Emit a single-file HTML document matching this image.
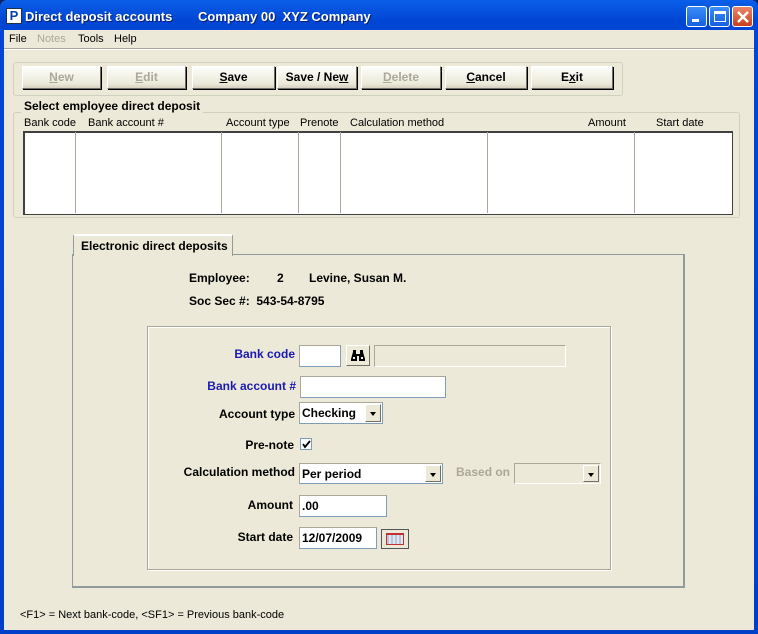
<!DOCTYPE html>
<html><head><style>
*{box-sizing:border-box;margin:0;padding:0}
body{width:758px;height:634px;overflow:hidden;font-family:"Liberation Sans",sans-serif;font-size:11px;background:#0a246a;position:relative}
.a{position:absolute}
#win{left:0;top:0;width:758px;height:634px;background:linear-gradient(#0a5fe8,#0046d5 20px,#0040c8);border-radius:7px 7px 0 0}
#client{left:4px;top:30px;width:750px;height:600px;background:#ece9d8}
.title{color:#fff;font-weight:bold;font-size:13px;top:9px;text-shadow:1px 1px #0a1e6a}
.tb{top:6px;width:21px;height:21px;border:1px solid #fff;border-radius:3px;background:linear-gradient(#3c8cf8,#1560e0)}
.btn{height:23px;top:66px;background:linear-gradient(#fdfdfb,#ece9d8 80%,#d6d0c0);border:1px solid #fff;border-right-color:#716f64;border-bottom-color:#716f64;box-shadow:1px 1px 0 #000;text-align:center;line-height:21px;font-weight:bold;font-size:12px}
.dis{color:#aca899}
.grp{border:1px solid #d0d0bf;border-radius:3px}
.lbl{font-weight:bold;font-size:12px;text-align:right}
.inp{background:#fff;border:1px solid #7f9db9;border-top-color:#aca899;border-left-color:#aca899;font-weight:bold;font-size:12px;padding:3px 2px}
.dd{position:absolute;right:1px;top:1px;bottom:1px;width:16px;background:#ece9d8;border:1px solid #fff;border-right-color:#716f64;border-bottom-color:#716f64}
.dd:after{content:"";position:absolute;left:4px;top:7px;border:3.5px solid transparent;border-top:4px solid #000;border-bottom:0}
.hd{top:117px;font-size:11px}
.vl{top:132px;width:1px;height:81px;background:#aca899}
</style></head><body>
<div id="win" class="a"></div>
<div class="a" style="left:6px;top:8px;width:16px;height:16px;background:#fff;border:1px solid #234;color:#0a3ea8;font-weight:bold;font-size:13px;line-height:14px;text-align:center">P</div>
<div class="a title" style="left:25px">Direct deposit accounts</div>
<div class="a title" style="left:198px">Company 00&nbsp; XYZ Company</div>
<div class="a tb" style="left:686px"><div class="a" style="left:5px;top:12px;width:7px;height:3px;background:#fff"></div></div>
<div class="a tb" style="left:709px"><div class="a" style="left:4px;top:4px;width:12px;height:11px;border:1px solid #fff;border-top-width:3px"></div></div>
<div class="a tb" style="left:732px;background:linear-gradient(#e8866a,#c8401e)"><svg class="a" style="left:4px;top:4px" width="12" height="12"><path d="M1 1L11 11M11 1L1 11" stroke="#fff" stroke-width="2.5"/></svg></div>
<div id="client" class="a"></div>
<div class="a" style="left:9px;top:33px;font-size:11px">File</div>
<div class="a" style="left:37px;top:33px;font-size:11px;color:#aca899">Notes</div>
<div class="a" style="left:78px;top:33px;font-size:11px">Tools</div>
<div class="a" style="left:114px;top:33px;font-size:11px">Help</div>
<div class="a" style="left:4px;top:48px;width:750px;height:2px;border-top:1px solid #aca899;border-bottom:1px solid #fff"></div>
<div class="a grp" style="left:13px;top:62px;width:610px;height:34px"></div>
<div class="a btn dis" style="left:22px;width:79px"><u>N</u>ew</div>
<div class="a btn dis" style="left:107px;width:79px"><u>E</u>dit</div>
<div class="a btn" style="left:192px;width:83px"><u>S</u>ave</div>
<div class="a btn" style="left:277px;width:80px">Save / Ne<u>w</u></div>
<div class="a btn dis" style="left:361px;width:80px"><u>D</u>elete</div>
<div class="a btn" style="left:445px;width:82px"><u>C</u>ancel</div>
<div class="a btn" style="left:531px;width:82px">E<u>x</u>it</div>
<div class="a grp" style="left:13px;top:112px;width:727px;height:106px"></div>
<div class="a" style="left:21px;top:99px;padding:0 3px;background:#ece9d8;font-weight:bold;font-size:12px">Select employee direct deposit</div>
<div class="a hd" style="left:24px">Bank code</div>
<div class="a hd" style="left:88px">Bank account #</div>
<div class="a hd" style="left:226px">Account type</div>
<div class="a hd" style="left:300px">Prenote</div>
<div class="a hd" style="left:350px">Calculation method</div>
<div class="a hd" style="left:588px">Amount</div>
<div class="a hd" style="left:656px">Start date</div>
<div class="a" style="left:23px;top:131px;width:710px;height:84px;background:#fff;border:1px solid #404040;border-top:2px solid #404040;border-left:2px solid #404040"></div>
<div class="a vl" style="left:75px"></div><div class="a vl" style="left:221px"></div><div class="a vl" style="left:298px"></div><div class="a vl" style="left:340px"></div><div class="a vl" style="left:487px"></div><div class="a vl" style="left:634px"></div>
<div class="a" style="left:72px;top:254px;width:613px;height:334px;border:1px solid #919b9c;border-right:2px solid #919b9c;border-bottom:2px solid #919b9c"></div>
<div class="a" style="left:73px;top:234px;width:160px;height:22px;background:#ece9d8;border:1px solid #919b9c;border-bottom:none;border-top:2px solid #fff;font-weight:bold;font-size:12px;padding:3px 0 0 7px">Electronic direct deposits</div>
<div class="a lbl" style="left:189px;top:271px">Employee:</div>
<div class="a lbl" style="left:277px;top:271px">2</div>
<div class="a lbl" style="left:309px;top:271px">Levine, Susan M.</div>
<div class="a lbl" style="left:189px;top:294px">Soc Sec #:&nbsp; 543-54-8795</div>
<div class="a" style="left:147px;top:326px;width:464px;height:244px;border:1px solid #aca899;box-shadow:inset 1px 1px 0 #fff,1px 1px 0 #fff"></div>
<div class="a lbl" style="left:150px;width:145px;top:347px;color:#1a1ab0">Bank code</div>
<div class="a inp" style="left:299px;top:345px;width:42px;height:22px"></div>
<div class="a" style="left:346px;top:345px;width:24px;height:21px;background:#ece9d8;border:1px solid #fff;border-right-color:#716f64;border-bottom-color:#716f64"><svg class="a" style="left:4px;top:4px" width="14" height="11"><path d="M2 0h3v4h4V0h3v2l2 7v2H8V6H6v5H0V9l2-7z" fill="#000"/><rect x="2" y="7" width="2" height="2" fill="#eee"/><rect x="10" y="7" width="2" height="2" fill="#eee"/></svg></div>
<div class="a" style="left:374px;top:345px;width:192px;height:22px;border:1px solid #aca899;border-right-color:#fff;border-bottom-color:#fff"></div>
<div class="a lbl" style="left:150px;width:146px;top:379px;color:#1a1ab0">Bank account #</div>
<div class="a inp" style="left:300px;top:376px;width:146px;height:22px"></div>
<div class="a lbl" style="left:150px;width:145px;top:407px">Account type</div>
<div class="a inp" style="left:299px;top:402px;width:84px;height:22px">Checking<div class="dd"></div></div>
<div class="a lbl" style="left:150px;width:144px;top:438px">Pre-note</div>
<div class="a" style="left:300px;top:438px;width:12px;height:12px;background:#fff;border:1px solid #7f9db9"><svg class="a" style="left:1px;top:1px" width="9" height="9"><path d="M1 4l2 3 5-6" stroke="#000" stroke-width="1.8" fill="none"/></svg></div>
<div class="a lbl" style="left:150px;width:145px;top:465px">Calculation method</div>
<div class="a inp" style="left:299px;top:463px;width:144px;height:21px">Per period<div class="dd"></div></div>
<div class="a lbl" style="left:456px;top:465px;color:#aca899">Based on</div>
<div class="a" style="left:514px;top:463px;width:87px;height:21px;border:1px solid #aca899;border-right-color:#fff;border-bottom-color:#fff"><div class="dd"></div></div>
<div class="a lbl" style="left:150px;width:143px;top:498px">Amount</div>
<div class="a inp" style="left:299px;top:495px;width:88px;height:22px">.00</div>
<div class="a lbl" style="left:150px;width:143px;top:530px">Start date</div>
<div class="a inp" style="left:299px;top:527px;width:78px;height:22px">12/07/2009</div>
<div class="a" style="left:381px;top:529px;width:28px;height:20px;background:#ece9d8;border:1px solid #555"><div class="a" style="left:4px;top:3px;width:18px;height:12px;border:1px solid #c03030;border-top-width:2px;background:repeating-linear-gradient(90deg,#b8c4d8 0 2px,#e0e6f0 2px 4px)"></div></div>
<div class="a" style="left:20px;top:609px;font-size:11px">&lt;F1&gt; = Next bank-code, &lt;SF1&gt; = Previous bank-code</div>
</body></html>
